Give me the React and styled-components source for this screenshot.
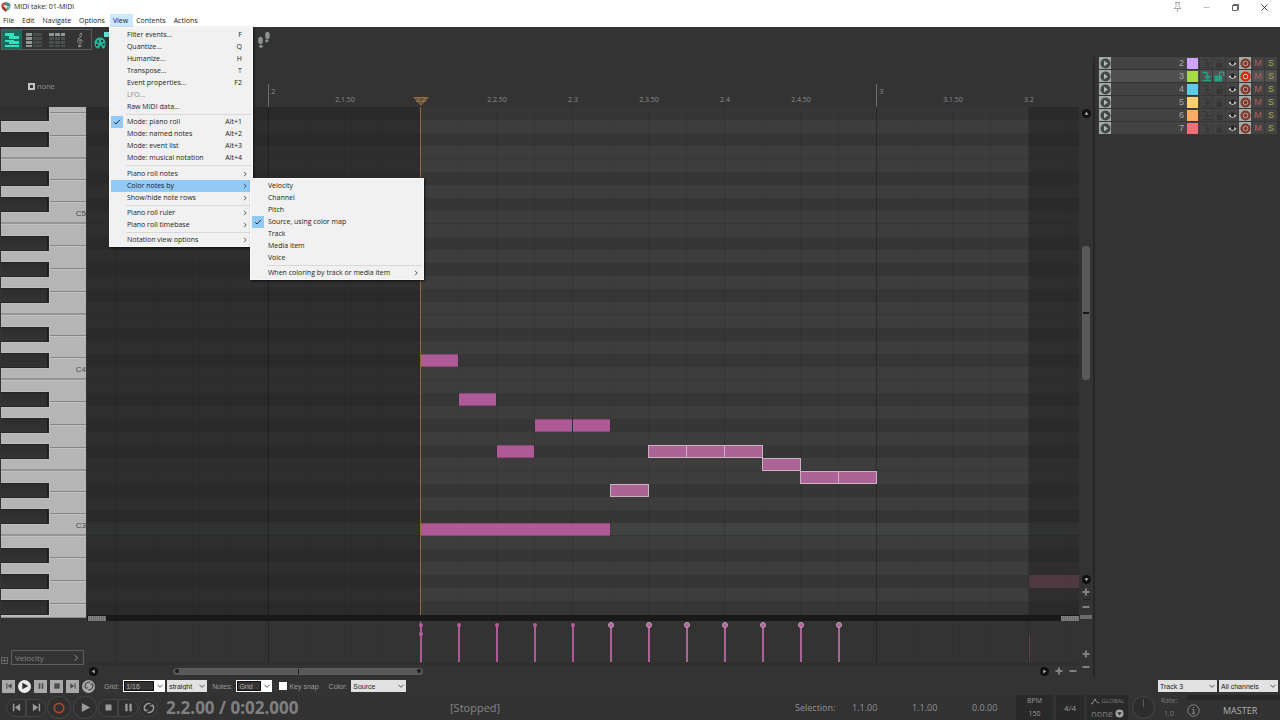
import React, { useState } from 'react';
import styled, { createGlobalStyle, css } from 'styled-components';
import { GiGClef } from 'react-icons/gi';

const GlobalStyle = createGlobalStyle`
  * {
    box-sizing: border-box;
  }
  body {
    margin: 0;
    background: #333333;
    font-family: 'Open Sans', 'Noto Sans', sans-serif;
    font-size: 7px;
    color: #8c8c8c;
  }
  button, input, select {
    font-family: inherit;
    font-size: inherit;
    color: inherit;
    margin: 0;
    padding: 0;
    border: none;
    background: none;
  }
  svg {
    display: block;
    flex: none;
  }
`;

const ROW_HEIGHT = 13;
const STEP = 38;
const FIRST_STEP = 29;
const TOP_PITCH = 80;
const ROW_COUNT = 39;
const BLACK_KEYS = [1, 3, 6, 8, 10];
const ITEM_START = 8;
const ITEM_END = 24;

const isBlack = (pitch) => BLACK_KEYS.includes(pitch % 12);
const stepX = (step) => FIRST_STEP + step * STEP;
const pitches = Array.from({ length: ROW_COUNT }, (_, i) => TOP_PITCH - i);
const steps = Array.from({ length: 26 }, (_, i) => i);

const notes = [
  { pitch: 61, start: 8, length: 1 },
  { pitch: 58, start: 9, length: 1 },
  { pitch: 54, start: 10, length: 1 },
  { pitch: 56, start: 11, length: 1 },
  { pitch: 56, start: 12, length: 1 },
  { pitch: 48, start: 8, length: 5 },
  { pitch: 51, start: 13, length: 1, selected: true },
  { pitch: 54, start: 14, length: 1, selected: true },
  { pitch: 54, start: 15, length: 1, selected: true },
  { pitch: 54, start: 16, length: 1, selected: true },
  { pitch: 53, start: 17, length: 1, selected: true },
  { pitch: 52, start: 18, length: 1, selected: true },
  { pitch: 52, start: 19, length: 1, selected: true },
];

const whiteKeys = [
  { name: 'A5', height: 6 },
  { name: 'G5', height: 23 },
  { name: 'F5', height: 23, full: true },
  { name: 'E5', height: 21 },
  { name: 'D5', height: 22 },
  { name: 'C5', height: 22, full: true },
  { name: 'B4', height: 22 },
  { name: 'A4', height: 23 },
  { name: 'G4', height: 23 },
  { name: 'F4', height: 23, full: true },
  { name: 'E4', height: 21 },
  { name: 'D4', height: 22 },
  { name: 'C4', height: 22, full: true },
  { name: 'B3', height: 22 },
  { name: 'A3', height: 23 },
  { name: 'G3', height: 23 },
  { name: 'F3', height: 23, full: true },
  { name: 'E3', height: 21 },
  { name: 'D3', height: 22 },
  { name: 'C3', height: 22, full: true },
  { name: 'B2', height: 22 },
  { name: 'A2', height: 23 },
  { name: 'G2', height: 23 },
  { name: 'F2', height: 14 },
];

const rulerMarks = [
  { step: 4, label: '2', bar: true },
  { step: 6, label: '2.1.50' },
  { step: 8, label: '2.2' },
  { step: 10, label: '2.2.50' },
  { step: 12, label: '2.3' },
  { step: 14, label: '2.3.50' },
  { step: 16, label: '2.4' },
  { step: 18, label: '2.4.50' },
  { step: 20, label: '3', bar: true },
  { step: 22, label: '3.1.50' },
  { step: 24, label: '3.2' },
];

const viewMenu = [
  [
    { label: 'Filter events...', keys: 'F' },
    { label: 'Quantize...', keys: 'Q' },
    { label: 'Humanize...', keys: 'H' },
    { label: 'Transpose...', keys: 'T' },
    { label: 'Event properties...', keys: 'F2' },
    { label: 'LFO...', disabled: true },
    { label: 'Raw MIDI data...' },
  ],
  [
    { label: 'Mode: piano roll', keys: 'Alt+1', checked: true },
    { label: 'Mode: named notes', keys: 'Alt+2' },
    { label: 'Mode: event list', keys: 'Alt+3' },
    { label: 'Mode: musical notation', keys: 'Alt+4' },
  ],
  [
    { label: 'Piano roll notes', more: true },
    {
      label: 'Color notes by',
      more: true,
      open: true,
      submenu: [
        [
          { label: 'Velocity' },
          { label: 'Channel' },
          { label: 'Pitch' },
          { label: 'Source, using color map', checked: true },
          { label: 'Track' },
          { label: 'Media item' },
          { label: 'Voice' },
        ],
        [{ label: 'When coloring by track or media item', more: true }],
      ],
    },
    { label: 'Show/hide note rows', more: true },
  ],
  [
    { label: 'Piano roll ruler', more: true },
    { label: 'Piano roll timebase', more: true },
  ],
  [{ label: 'Notation view options', more: true }],
];

const tracks = [
  { number: 2, color: '#cfa4fb' },
  { number: 3, color: '#a8d94c', active: true },
  { number: 4, color: '#5ccbe6' },
  { number: 5, color: '#ffd071' },
  { number: 6, color: '#fcab63' },
  { number: 7, color: '#f07078' },
];

const Window = styled.div`
  display: flex;
  flex-direction: column;
  min-height: 100vh;
  overflow: hidden;
`;

const TitleBar = styled.header`
  display: flex;
  align-items: center;
  gap: 3px;
  height: 14px;
  padding: 0 10px 0 1px;
  background: #ffffff;
  color: #1a1a1a;
  font-size: 7px;
  line-height: 14px;
`;
const WindowButtons = styled.div`
  display: flex;
  gap: 18px;
  margin-left: auto;
  button {
    display: flex;
    align-items: center;
    justify-content: center;
    width: 11px;
    height: 14px;
  }
`;

const MenuBar = styled.nav`
  display: flex;
  height: 13px;
  background: #ffffff;
  color: #1a1a1a;
`;
const MenuSlot = styled.div`
  position: relative;
`;
const MenuTitle = styled.button`
  height: 13px;
  padding: 0 5px 0 3px;
  font-size: 7px;
  line-height: 12px;
  background: ${(props) => (props.$open ? '#cce8ff' : 'none')};
`;
const MenuPanel = styled.div`
  position: absolute;
  z-index: 5;
  top: ${(props) => (props.$nested ? '-2px' : '100%')};
  left: ${(props) => (props.$nested ? '140px' : '-1px')};
  display: flex;
  flex-direction: column;
  justify-content: space-between;
  width: ${(props) => (props.$nested ? '174px' : '144px')};
  height: ${(props) => (props.$nested ? '102px' : '220px')};
  padding-top: 1px;
  border: 1px solid #f8f8f8;
  background: #f1f1f1;
  color: #1c1c1c;
  box-shadow: 1px 1px 2px rgba(0, 0, 0, 0.7);
`;
const MenuRule = styled.hr`
  width: calc(100% - 17px);
  height: 1px;
  margin: 0 0 0 16px;
  border: none;
  background: #d8d8d8;
`;
const MenuRow = styled.div`
  position: relative;
`;
const MenuItem = styled.button`
  display: flex;
  align-items: center;
  width: calc(100% - 3px);
  height: 12px;
  margin-left: 1px;
  padding-right: 2px;
  font-size: 7px;
  line-height: 12px;
  text-align: left;
  background: ${(props) => (props.$open ? '#91c9f7' : 'none')};
  color: ${(props) => (props.disabled ? '#8a8a8a' : 'inherit')};
`;
const MenuCheck = styled.span`
  display: flex;
  align-items: center;
  justify-content: center;
  width: 12px;
  height: 12px;
  margin-right: 4px;
  background: ${(props) => (props.$checked ? '#91c9f7' : 'none')};
`;
const MenuKeys = styled.span`
  margin-left: auto;
  padding-right: 6px;
`;
const MenuArrow = styled.span`
  margin-left: auto;
`;

const Workspace = styled.main`
  display: flex;
  flex: 1;
`;
const Editor = styled.section`
  display: flex;
  flex-direction: column;
  flex: 1;
  min-width: 0;
`;
const IconBar = styled.div`
  display: flex;
  align-items: flex-start;
  height: 29px;
  padding: 2px 0 0 1px;
`;
const ModeGroup = styled.div`
  display: flex;
  height: 21px;
  border: 1px solid #5a5f5e;
`;
const ModeButton = styled.button`
  display: flex;
  align-items: center;
  justify-content: center;
  width: ${(props) => (props.$active ? '20px' : '23px')};
  height: 19px;
  color: #8f9897;
  background: ${(props) => (props.$active ? '#1a6a5d' : 'none')};
`;
const ToolButton = styled.button`
  display: flex;
  height: 21px;
  margin-left: ${(props) => (props.$far ? '146px' : '2px')};
`;

const Columns = styled.div`
  display: flex;
  flex: 1;
`;
const KeyColumn = styled.div`
  display: flex;
  flex-direction: column;
  width: 87px;
`;
const ChannelCorner = styled.div`
  height: 51px;
  padding: 24px 0 0 28px;
  label {
    display: flex;
    align-items: center;
    gap: 2px;
    font-family: 'Liberation Sans', Arial, sans-serif;
    font-size: 8px;
    line-height: 13px;
  }
  input {
    appearance: none;
    width: 7px;
    height: 7px;
    border: 2px solid #c4c4c4;
  }
`;
const Piano = styled.div`
  position: relative;
  height: 511px;
  margin: 0 1px;
  background: #b5b5b5;
  border-bottom: 1px solid #8d8d8d;
  overflow: hidden;
`;
const WhiteKey = styled.div`
  height: ${(props) => props.$height}px;
  margin-left: ${(props) => (props.$full ? '0' : '49px')};
  border-bottom: ${(props) =>
    props.$full ? '2px solid #949494' : '1px solid #858585'};
  box-shadow: 0 1px 0 #c2c2c2;
  font-family: 'Liberation Sans', Arial, sans-serif;
  font-size: 8px;
  line-height: 23px;
  text-align: right;
  color: #4c4c4c;
`;
const BlackKeys = styled.div`
  position: absolute;
  top: 0;
  left: 0;
  width: 47px;
`;
const BlackKey = styled.div`
  height: ${ROW_HEIGHT}px;
  ${(props) =>
    props.$black &&
    css`
      background: linear-gradient(#2d2d2d, #343434);
      border-right: 1px solid #1d1d1d;
      box-shadow: 0 0 0 1px #262626, 0 0 0 2px #bdbdbd;
    `}
`;
const LanePicker = styled.div`
  display: flex;
  align-items: flex-end;
  gap: 2px;
  padding: 32px 3px 0 1px;
`;
const LaneButton = styled.button`
  display: flex;
  flex: 1;
  align-items: center;
  justify-content: space-between;
  height: 15px;
  padding: 0 3px;
  border: 1px solid #5e5e5e;
  font-size: 8px;
  line-height: 13px;
  color: #858585;
`;

const Timeline = styled.div`
  display: flex;
  flex-direction: column;
  flex: 1;
  min-width: 0;
`;
const Ruler = styled.div`
  position: relative;
  height: 51px;
`;
const RulerMark = styled.span`
  position: absolute;
  bottom: ${(props) => (props.$bar ? '0' : '2px')};
  height: ${(props) => (props.$bar ? '23px' : '10px')};
  font-size: ${(props) => (props.$bar ? '8px' : '7px')};
  line-height: ${(props) => (props.$bar ? '13px' : '10px')};
  white-space: nowrap;
  ${(props) =>
    props.$bar
      ? css`
          padding-left: 2px;
          border-left: 1px solid #6e6e6e;
        `
      : css`
          margin-left: 1px;
          transform: translateX(-50%);
        `}
`;
const CursorHead = styled.svg`
  position: absolute;
  bottom: 1px;
  margin-left: -7px;
`;
const Roll = styled.div`
  position: relative;
  height: 508px;
  overflow: hidden;
`;
const Row = styled.div`
  height: ${ROW_HEIGHT}px;
  background: ${(props) =>
    props.$root ? '#404342' : props.$black ? '#363636' : '#3d3d3d'};
  border-bottom: 1px solid ${(props) => (props.$edge ? '#363636' : 'transparent')};
`;
const Shade = styled.div`
  position: absolute;
  top: 0;
  bottom: 0;
  background: rgba(24, 24, 24, 0.4);
`;
const GridLine = styled.div`
  position: absolute;
  top: 0;
  bottom: 0;
  width: 1px;
  background: rgba(0, 0, 0, ${(props) => props.$depth});
`;
const OutOfRange = styled.div`
  position: absolute;
  height: ${ROW_HEIGHT}px;
  right: 0;
  background: #4f3940;
`;
const Note = styled.div`
  position: absolute;
  height: 13px;
  border: 1px solid ${(props) => (props.$selected ? '#c9b3c2' : '#8a4877')};
  border-width: ${(props) => (props.$selected ? '1px' : '1px 0')};
  background: ${(props) => (props.$selected ? '#ac6497' : '#ae5a97')};
`;
const PlayLine = styled.div`
  position: absolute;
  top: 0;
  bottom: 0;
  width: 1px;
  background: #92683f;
`;
const Splitter = styled.div`
  display: flex;
  align-items: center;
  justify-content: space-between;
  height: 6px;
  padding-left: 1px;
  background: #191919;
`;
const Grip = styled.div`
  width: 18px;
  height: 5px;
  background: repeating-linear-gradient(90deg, #808080 0 1px, #6e6e6e 1px 2px);
`;
const Lane = styled.div`
  position: relative;
  height: 44px;
  border-bottom: 2px solid #2e2e2e;
`;
const Stem = styled.div`
  position: absolute;
  top: 4px;
  bottom: 1px;
  width: 2px;
  background: ${(props) => (props.$selected ? '#ac6497' : '#ae5a97')};
`;
const Head = styled.div`
  position: absolute;
  width: ${(props) => (props.$selected ? '6px' : '4px')};
  height: ${(props) => (props.$selected ? '6px' : '4px')};
  border-radius: 50%;
  border: ${(props) => (props.$selected ? '1px solid #b9a3b2' : 'none')};
  background: #b5609e;
`;
const EndStem = styled.div`
  position: absolute;
  top: 13px;
  bottom: 1px;
  width: 1px;
  background: #5c3f46;
`;
const TimeScroll = styled.div`
  display: flex;
  align-items: center;
  gap: 6px;
  height: 12px;
  padding: 0 2px;
`;
const ScrollTrack = styled.div`
  flex: 1;
  padding-left: 69px;
`;
const TimeThumb = styled.div`
  display: flex;
  align-items: center;
  justify-content: space-between;
  width: 250px;
  height: 7px;
  padding: 0 2px;
  border-radius: 4px;
  background: #595959;
  i {
    width: 4px;
    height: 4px;
    border-radius: 50%;
    background: #1c1c1c;
  }
  b {
    width: 1px;
    height: 5px;
    background: #1c1c1c;
  }
`;
const RoundArrow = styled.button`
  display: flex;
  align-items: center;
  justify-content: center;
  width: 9px;
  height: 9px;
  border-radius: 50%;
  background: #101010;
  color: #b0b0b0;
`;
const ZoomButton = styled.button`
  display: flex;
  align-items: center;
  justify-content: center;
  width: 8px;
  height: 8px;
  color: #818181;
`;
const PitchScroll = styled.div`
  display: flex;
  flex-direction: column;
  align-items: center;
  width: 14px;
  padding-top: 53px;
`;
const PitchTrack = styled.div`
  width: 8px;
  height: 457px;
  padding-top: 128px;
`;
const PitchThumb = styled.div`
  display: flex;
  align-items: center;
  justify-content: center;
  width: 8px;
  height: 134px;
  border-radius: 3px;
  background: #595959;
  b {
    width: 6px;
    height: 2px;
    background: #161616;
  }
`;
const ZoomPair = styled.div`
  display: flex;
  flex-direction: column;
  align-items: center;
  gap: ${(props) => props.$gap}px;
  padding-top: 4px;
  hr {
    width: 7px;
    height: 1px;
    margin: 0;
    border: none;
    background: #222222;
  }
`;
const SideGrip = styled.div`
  width: 12px;
  height: 4px;
  margin: 4px 0 27px;
  background: #6b6b6b;
`;

const TrackPanel = styled.aside`
  width: 187px;
  margin-top: 30px;
  padding-right: 3px;
  padding-left: 3px;
  border-left: 2px solid #262626;
`;
const TrackRow = styled.div`
  display: flex;
  align-items: center;
  height: 13px;
  border-bottom: 1px solid #353535;
  background: ${(props) => (props.$active ? '#505050' : '#434343')};
`;
const TrackNumber = styled.span`
  flex: 1;
  padding-right: 3px;
  text-align: right;
  font-family: 'Liberation Sans', Arial, sans-serif;
  font-size: 9px;
  line-height: 12px;
  color: #a9a9a9;
`;
const Swatch = styled.span`
  width: 11px;
  height: 11px;
  margin-right: 1px;
  background: ${(props) => props.$color};
`;
const TrackButton = styled.button`
  display: flex;
  align-items: center;
  justify-content: center;
  width: 13px;
  height: 12px;
  border-left: 1px solid #3a3a3a;
  font-family: 'Liberation Sans', Arial, sans-serif;
  font-size: 9px;
  line-height: 12px;
  color: ${(props) => props.$color || '#363636'};
  background: ${(props) => (props.$light ? '#a3aba8' : 'none')};
`;

const BottomBar = styled.div`
  display: flex;
  align-items: center;
  height: 18px;
  padding: 0 2px;
`;
const MiniButtons = styled.div`
  display: flex;
  gap: 3px;
  margin-right: 9px;
`;
const MiniButton = styled.button`
  display: flex;
  align-items: center;
  justify-content: center;
  width: 13px;
  height: 13px;
  border-radius: ${(props) => (props.$round ? '50%' : '0')};
  background: ${(props) => (props.$on ? '#ececec' : '#a9a9a9')};
  color: ${(props) => (props.$on ? '#303030' : '#4c4c4c')};
`;
const FieldLabel = styled.label`
  margin: 0 4px 0 ${(props) => (props.$spaced ? '10px' : '0')};
  font-family: 'Liberation Sans', Arial, sans-serif;
  font-size: 7px;
  color: #9c9c9c;
`;
const Combo = styled.div`
  position: relative;
  display: flex;
  align-items: center;
  width: ${(props) => props.$width}px;
  height: 12px;
  margin-right: ${(props) => props.$after || 0}px;
  background: ${(props) => (props.$editable ? '#ffffff' : '#e1e1e1')};
  color: #1c1c1c;
  svg {
    position: absolute;
    right: 2px;
    pointer-events: none;
  }
  select {
    appearance: none;
    width: 100%;
    height: 12px;
    padding-left: 2px;
    font-family: 'Liberation Sans', Arial, sans-serif;
    font-size: 7px;
  }
  input {
    width: calc(100% - 12px);
    height: 10px;
    margin-left: 1px;
    padding-left: 1px;
    border: 1px solid #101010;
    background: #333333;
    color: #b5b5b5;
    font-family: 'Liberation Sans', Arial, sans-serif;
    font-size: 7px;
  }
`;
const SnapBox = styled.label`
  display: flex;
  align-items: center;
  gap: 2px;
  font-family: 'Liberation Sans', Arial, sans-serif;
  font-size: 7px;
  color: #9c9c9c;
  input {
    appearance: none;
    width: 8px;
    height: 8px;
    background: #ffffff;
  }
`;
const Spring = styled.div`
  flex: 1;
`;

const Transport = styled.footer`
  display: flex;
  align-items: center;
  height: 25px;
  background: #323232;
`;
const TransportKeys = styled.div`
  display: flex;
  align-items: center;
  padding-left: 6px;
`;
const TransportButton = styled.button`
  display: flex;
  align-items: center;
  justify-content: center;
  width: ${(props) => (props.$round ? '24px' : '20px')};
  height: ${(props) => (props.$round ? '23px' : '18px')};
  margin: ${(props) => (props.$round ? '0 1px' : '0')};
  border: 1px solid #444444;
  border-radius: ${(props) => props.$radius};
  background: #2f2f2f;
  color: #9b9b9b;
`;
const LoopButton = styled(TransportButton)`
  width: 19px;
  margin-left: 1px;
`;
const Clock = styled.div`
  width: 292px;
  padding-left: 8px;
  font-size: 17px;
  font-weight: 700;
  line-height: 24px;
  color: #808080;
`;
const Status = styled.div`
  font-size: 11px;
  line-height: 24px;
  color: #858585;
`;
const Readout = styled.div`
  width: 60px;
  font-size: 9px;
  line-height: 24px;
  color: #929292;
`;
const ReadoutLabel = styled(Readout)`
  width: 57px;
`;
const LastReadout = styled(Readout)`
  width: 44px;
`;
const Tempo = styled.div`
  display: flex;
  flex-direction: column;
  align-items: center;
  justify-content: space-around;
  width: ${(props) => props.$width}px;
  height: 25px;
  margin-right: 3px;
  background: #292929;
  color: #9c9c9c;
  font-size: ${(props) => props.$size || 7}px;
  line-height: 10px;
`;
const GlobalRow = styled.button`
  display: flex;
  align-items: center;
  gap: 2px;
  font-size: ${(props) => (props.$big ? '9px' : '6px')};
  line-height: 10px;
  color: #7f7f7f;
`;
const RateKnob = styled.div`
  width: 23px;
  height: 23px;
  margin: 0 5px 0 1px;
  border: 1px solid #484848;
  border-radius: 50%;
  background: #2d2d2d;
  &::before {
    content: '';
    display: block;
    width: 1px;
    height: 8px;
    margin: 2px auto 0;
    background: #5a5a5a;
  }
`;
const Rate = styled.div`
  display: flex;
  flex-direction: column;
  justify-content: space-around;
  align-items: center;
  width: 18px;
  height: 25px;
  margin-right: 9px;
  font-size: 7px;
  line-height: 10px;
  color: #7c7c7c;
`;
const Master = styled.button`
  display: flex;
  align-items: center;
  width: 93px;
  height: 25px;
  border-top: 5px solid #282828;
  gap: 23px;
  font-size: 9px;
  color: #b0b0b0;
`;

const Chevron = () => (
  <svg width='6' height='6' viewBox='0 0 6 6' fill='none' stroke='#444444'>
    <path d='M0.5 1.8L3 4.3L5.5 1.8' strokeWidth='0.9' />
  </svg>
);

const RightChevron = ({ size = 6, color = '#333333' }) => (
  <svg width={size} height={size} viewBox='0 0 6 6' fill='none' stroke={color}>
    <path d='M2 0.8L4.2 3L2 5.2' strokeWidth='0.8' />
  </svg>
);

const Triangle = ({ turn = 0 }) => (
  <svg width='5' height='5' viewBox='0 0 5 5' fill='currentColor'>
    <path d='M1.3 0.5L4.3 2.5L1.3 4.5Z' transform={`rotate(${turn} 2.5 2.5)`} />
  </svg>
);

const PlusMinus = ({ plus }) => (
  <svg width='8' height='8' viewBox='0 0 8 8' fill='currentColor'>
    <rect x='0.5' y='3' width='7' height='2' />
    {plus && <rect x='3' y='0.5' width='2' height='7' />}
  </svg>
);

const Logo = () => (
  <svg width='10' height='10' viewBox='0 0 10 10'>
    <path d='M5 0.3C2 0.3 0.3 2 0.3 3.6L5 5Z' fill='#c43a31' />
    <path d='M5 0.3C8 0.3 9.7 2 9.7 3.8L5 5L3.8 1.4Z' fill='#3b8f83' />
    <path d='M9.7 3.8C9.6 6.5 7.5 9 5 9.7L4.6 5Z' fill='#7cae9d' />
    <path d='M0.3 3.6C0.6 6.8 2.6 9 5 9.7L5.6 6Z' fill='#a02a26' />
    <path d='M2.3 2.2L6.8 4.2L4.4 7Z' fill='#f5e8e0' />
  </svg>
);

const transportShapes = {
  prev: <path d='M2 2h1.6v8H2zM10 2v8L4 6z' />,
  next: <path d='M8.4 2H10v8H8.4zM2 2v8l6-4z' />,
  play: <path d='M2 1L11 6L2 11Z' />,
  pause: <path d='M2.5 2H5v8H2.5zM7 2h2.5v8H7z' />,
  stop: <path d='M2 2h8v8H2z' />,
  loop: (
    <g fill='none' stroke='currentColor' strokeWidth='1.5'>
      <path d='M2.2 8.5A4.5 4.5 0 0 1 7.5 1.8M9.8 3.5A4.5 4.5 0 0 1 4.5 10.2' />
      <path d='M1 6.5L2.3 9L4.8 7.8M11 5.5L9.7 3L7.2 4.2' strokeWidth='1.2' />
    </g>
  ),
};

const TransportIcon = ({ name, size = 9 }) => (
  <svg width={size} height={size} viewBox='0 0 12 12' fill='currentColor'>
    {transportShapes[name]}
  </svg>
);

const MenuGroups = ({ groups }) =>
  groups.map((group, index) => (
    <React.Fragment key={group[0].label}>
      {index > 0 && <MenuRule />}
      <div>
        {group.map((item) => (
          <MenuRow key={item.label}>
            <MenuItem type='button' disabled={item.disabled} $open={item.open}>
              <MenuCheck $checked={item.checked}>
                {item.checked && (
                  <svg width='8' height='8' viewBox='0 0 8 8' fill='none' stroke='#1c2f40'>
                    <path d='M1.2 4.2L3 6L6.8 1.9' />
                  </svg>
                )}
              </MenuCheck>
              {item.label}
              {item.keys && <MenuKeys>{item.keys}</MenuKeys>}
              {item.more && (
                <MenuArrow>
                  <RightChevron />
                </MenuArrow>
              )}
            </MenuItem>
            {item.submenu && (
              <MenuPanel $nested>
                <MenuGroups groups={item.submenu} />
              </MenuPanel>
            )}
          </MenuRow>
        ))}
      </div>
    </React.Fragment>
  ));

const Header = () => {
  const [openMenu, setOpenMenu] = useState('View');
  const toggleMenu = (title) => setOpenMenu(openMenu === title ? '' : title);

  return (
    <>
      <TitleBar>
        <Logo />
        <span>MIDI take: 01-MIDI</span>
        <WindowButtons>
          <button type='button' aria-label='Pin'>
            <svg width='9' height='11' viewBox='0 0 9 11' fill='none' stroke='#a8a8a8'>
              <path d='M2 0.5H7M3 0.5V4.5L1 6.5H8L6 4.5V0.5M4.5 6.5V10' />
            </svg>
          </button>
          <button type='button' aria-label='Minimize'>
            <svg width='7' height='7' viewBox='0 0 7 7' stroke='#c0c0c0'>
              <path d='M0.5 3.5H6.5' />
            </svg>
          </button>
          <button type='button' aria-label='Restore'>
            <svg width='7' height='7' viewBox='0 0 7 7' fill='none' stroke='#222222'>
              <path
                d='M0.5 1.5H5.5V6.5H0.5ZM1.5 1.5V0.5H6.5V5.5H5.5'
                strokeWidth='0.7'
              />
            </svg>
          </button>
          <button type='button' aria-label='Close'>
            <svg width='7' height='7' viewBox='0 0 7 7' stroke='#222222'>
              <path d='M0.5 0.5L6.5 6.5M6.5 0.5L0.5 6.5' strokeWidth='0.8' />
            </svg>
          </button>
        </WindowButtons>
      </TitleBar>
      <MenuBar>
        {['File', 'Edit', 'Navigate', 'Options', 'View', 'Contents', 'Actions'].map(
          (title) => (
            <MenuSlot key={title}>
              <MenuTitle
                type='button'
                $open={openMenu === title}
                onClick={() => toggleMenu(title)}
              >
                {title}
              </MenuTitle>
              {title === 'View' && openMenu === 'View' && (
                <MenuPanel>
                  <MenuGroups groups={viewMenu} />
                </MenuPanel>
              )}
            </MenuSlot>
          )
        )}
      </MenuBar>
    </>
  );
};

const EditorIcons = () => (
  <IconBar>
    <ModeGroup>
      <ModeButton type='button' aria-label='Piano roll' $active>
        <svg width='16' height='16' viewBox='0 0 16 16' fill='#35e0bf'>
          <path d='M1 1h9v3H1zM5 4h10v3H5zM1 8h9v2H1zM5 9h10v3H5zM1 13h14v2H1z' />
        </svg>
      </ModeButton>
      <ModeButton type='button' aria-label='Named notes'>
        <svg width='18' height='16' viewBox='0 0 18 16'>
          <path d='M1 1h6v3H1zM1 5h6v3H1zM1 9h6v3H1zM1 13h6v2H1z' fill='#8f9897' />
          <path d='M8 1h9v3H8zM8 5h9v3H8zM8 9h9v3H8zM8 13h9v2H8z' fill='#484c4b' />
        </svg>
      </ModeButton>
      <ModeButton type='button' aria-label='Event list'>
        <svg width='18' height='16' viewBox='0 0 18 16'>
          <path d='M1 1h5v3H1zM7 1h5v3H7zM13 1h4v3h-4z' fill='#8f9897' />
          <path
            d='M1 5h5v3H1zM7 5h5v3H7zM13 5h4v3h-4zM1 9h5v3H1zM7 9h5v3H7zM13 9h4v3h-4zM1 13h5v2H1zM7 13h5v2H7zM13 13h4v2h-4z'
            fill='#4b504f'
          />
        </svg>
      </ModeButton>
      <ModeButton type='button' aria-label='Musical notation'>
        <GiGClef size={16} />
      </ModeButton>
    </ModeGroup>
    <ToolButton type='button' aria-label='Note colors'>
      <svg width='16' height='20' viewBox='0 0 16 20'>
        <path
          fill='#1fb89a'
          fillRule='evenodd'
          d='M6 8.5C2.5 8.5 0.5 11 0.5 14C0.5 17 2 19.5 4.500 19.5C6 19.5 5.2 16.5 6.5 16.5C8 16.5 7.5 19.5 9 19.5C11 19.5 11.5 17 11.5 14C11.5 11 9.5 8.5 6 8.5ZM3 11.5h2v2H3zM7 11h2v2H7zM2 15h2v2H2zM8.5 14.5h2v2H8.5z'
        />
        <rect x='10' y='3' width='6' height='5' fill='#5fe0cb' />
      </svg>
    </ToolButton>
    <ToolButton type='button' aria-label='Step input' $far>
      <svg width='16' height='20' viewBox='0 0 16 20' fill='#8a9090'>
        <ellipse cx='4.5' cy='11.5' rx='2.4' ry='3.7' />
        <ellipse cx='5' cy='17.3' rx='1.8' ry='1.5' />
        <ellipse cx='11.5' cy='6.5' rx='2.3' ry='3.7' />
        <ellipse cx='10.8' cy='12' rx='1.7' ry='1.4' />
      </svg>
    </ToolButton>
  </IconBar>
);

const PianoKeys = () => (
  <KeyColumn>
    <ChannelCorner>
      <label>
        <input type='checkbox' />
        none
      </label>
    </ChannelCorner>
    <Piano>
      {whiteKeys.map((key) => (
        <WhiteKey key={key.name} $height={key.height} $full={key.full}>
          {key.name.startsWith('C') && key.name}
        </WhiteKey>
      ))}
      <BlackKeys>
        {pitches.map((pitch) => (
          <BlackKey key={pitch} $black={isBlack(pitch)} />
        ))}
      </BlackKeys>
    </Piano>
    <LanePicker>
      <svg width='8' height='8' viewBox='0 0 8 8' fill='none' stroke='#777777'>
        <path d='M0.5 0.5h6v6h-6zM3.5 1.5v4M1.5 3.5h4' strokeWidth='0.8' />
      </svg>
      <LaneButton type='button'>
        Velocity
        <RightChevron size={8} color='#777777' />
      </LaneButton>
    </LanePicker>
  </KeyColumn>
);

const gridDepth = (step) => {
  if (step === 4 || step === 20) return 0.28;
  return step % 4 === 0 ? 0.14 : 0.06;
};

const GridLines = () =>
  steps.map((step) => (
    <GridLine key={step} $depth={gridDepth(step)} style={{ left: stepX(step) }} />
  ));

const TimelineView = () => (
  <Timeline>
    <Ruler>
      {rulerMarks.map((mark) => (
        <RulerMark key={mark.label} $bar={mark.bar} style={{ left: stepX(mark.step) }}>
          {mark.label}
        </RulerMark>
      ))}
      <CursorHead
        width='16'
        height='9'
        viewBox='0 0 16 9'
        fill='rgba(190, 130, 70, 0.4)'
        stroke='#a5753f'
        style={{ left: stepX(ITEM_START) }}
      >
        <path d='M0.8 0.5H15.2L8 8.3Z' strokeWidth='0.8' />
      </CursorHead>
    </Ruler>
    <Roll>
      {pitches.map((pitch) => (
        <Row
          key={pitch}
          $black={isBlack(pitch)}
          $root={pitch === 48}
          $edge={pitch % 12 === 0 || pitch % 12 === 5}
        />
      ))}
      <Shade style={{ left: 0, width: stepX(ITEM_START) }} />
      <Shade style={{ left: stepX(ITEM_END) + 1, right: 0 }} />
      <OutOfRange style={{ left: stepX(ITEM_END) + 1, top: 36 * ROW_HEIGHT }} />
      <GridLines />
      {notes.map((note) => (
        <Note
          key={`${note.pitch}-${note.start}`}
          $selected={note.selected}
          style={{
            left: stepX(note.start) + (note.selected ? 0 : 1),
            top: (TOP_PITCH - note.pitch) * ROW_HEIGHT,
            width: note.length * STEP + (note.selected ? 1 : -1),
          }}
        />
      ))}
      <PlayLine style={{ left: stepX(ITEM_START) }} />
    </Roll>
    <Splitter>
      <Grip />
      <Grip />
    </Splitter>
    <Lane>
      <GridLines />
      <PlayLine style={{ left: stepX(ITEM_START) }} />
      {notes
        .filter((note) => note.length === 1)
        .map((note) => (
          <React.Fragment key={note.start}>
            <Stem $selected={note.selected} style={{ left: stepX(note.start) }} />
            <Head
              $selected={note.selected}
              style={{
                left: stepX(note.start) - (note.selected ? 2 : 1),
                top: note.selected ? 1 : 2,
              }}
            />
          </React.Fragment>
        ))}
      <Head style={{ left: stepX(ITEM_START) - 1, top: 11 }} />
      <EndStem style={{ left: stepX(ITEM_END) + 1 }} />
    </Lane>
    <TimeScroll>
      <RoundArrow type='button' aria-label='Scroll left'>
        <Triangle turn={180} />
      </RoundArrow>
      <ScrollTrack>
        <TimeThumb>
          <i />
          <b />
          <i />
        </TimeThumb>
      </ScrollTrack>
      <RoundArrow type='button' aria-label='Scroll right'>
        <Triangle />
      </RoundArrow>
      <ZoomButton type='button' aria-label='Zoom in time'>
        <PlusMinus plus />
      </ZoomButton>
      <ZoomButton type='button' aria-label='Zoom out time'>
        <PlusMinus />
      </ZoomButton>
    </TimeScroll>
  </Timeline>
);

const PitchScrollbar = () => (
  <PitchScroll>
    <RoundArrow type='button' aria-label='Scroll up'>
      <Triangle turn={270} />
    </RoundArrow>
    <PitchTrack>
      <PitchThumb>
        <b />
      </PitchThumb>
    </PitchTrack>
    <RoundArrow type='button' aria-label='Scroll down'>
      <Triangle turn={90} />
    </RoundArrow>
    <ZoomPair $gap={3}>
      <ZoomButton type='button' aria-label='Zoom in pitch'>
        <PlusMinus plus />
      </ZoomButton>
      <hr />
      <ZoomButton type='button' aria-label='Zoom out pitch'>
        <PlusMinus />
      </ZoomButton>
    </ZoomPair>
    <SideGrip />
    <ZoomPair $gap={5}>
      <ZoomButton type='button' aria-label='Zoom in lane'>
        <PlusMinus plus />
      </ZoomButton>
      <ZoomButton type='button' aria-label='Zoom out lane'>
        <PlusMinus />
      </ZoomButton>
    </ZoomPair>
  </PitchScroll>
);

const TrackList = () => (
  <TrackPanel>
    {tracks.map((track) => (
      <TrackRow key={track.number} $active={track.active}>
        <TrackButton type='button' aria-label='Show track' $light>
          <svg width='11' height='11' viewBox='0 0 11 11'>
            <circle cx='5.5' cy='5.5' r='5' fill='#444948' />
            <path d='M4 2.8L8 5.5L4 8.2Z' fill='#b3bab8' />
          </svg>
        </TrackButton>
        <TrackNumber>{track.number}</TrackNumber>
        <Swatch $color={track.color} />
        <TrackButton
          type='button'
          aria-label='Record to track'
          $color={track.active ? '#1da583' : undefined}
        >
          <svg width='11' height='11' viewBox='0 0 11 11' fill='none' stroke='currentColor'>
            <path
              d='M1 1.5H4Q6.5 1.5 6.5 4V7M4 5L6.5 7.5L9 5M1.5 9.5H10'
              strokeWidth={track.active ? 1.6 : 1.1}
            />
          </svg>
        </TrackButton>
        <TrackButton
          type='button'
          aria-label='Lock'
          $color={track.active ? '#1da583' : undefined}
        >
          <svg width='11' height='11' viewBox='0 0 11 11' fill='currentColor'>
            {track.active ? (
              <>
                <rect x='0.5' y='4.5' width='7.5' height='6' />
                <path
                  d='M5.5 4.5V2.5Q5.5 1 7.5 1Q9.8 1 9.8 2.5V5'
                  fill='none'
                  stroke='currentColor'
                  strokeWidth='1.4'
                />
              </>
            ) : (
              <>
                <rect x='2.5' y='5' width='6' height='5' />
                <path
                  d='M3.5 5V3.5Q3.5 2 5.5 2Q7.5 2 7.5 3.5V5'
                  fill='none'
                  stroke='currentColor'
                />
              </>
            )}
          </svg>
        </TrackButton>
        <TrackButton type='button' aria-label='Visible'>
          <svg width='9' height='9' viewBox='0 0 9 9'>
            <path d='M0.5 4.5Q4.5 0.5 8.5 4.5Q4.5 9 0.5 4.5Z' fill='#d8dedc' />
            <circle cx='4.5' cy='4' r='2' fill='#222222' />
            <path d='M0.5 4Q4.5 0 8.5 4' fill='none' stroke='#1c1c1c' strokeWidth='0.8' />
          </svg>
        </TrackButton>
        <TrackButton type='button' aria-label='Record arm' $light>
          <svg width='11' height='11' viewBox='0 0 11 11'>
            <circle cx='5.5' cy='5.5' r='5' fill={track.active ? '#dd2208' : '#7b3b30'} />
            <circle
              cx='5.5'
              cy='5.5'
              r='2.3'
              fill='none'
              stroke={track.active ? '#f3d3cb' : '#c79d94'}
            />
          </svg>
        </TrackButton>
        <TrackButton type='button' $color='#b0605a'>
          M
        </TrackButton>
        <TrackButton type='button' $color='#a9a94e'>
          S
        </TrackButton>
      </TrackRow>
    ))}
  </TrackPanel>
);

const GridControls = () => {
  const [gridSize, setGridSize] = useState('1/16');
  const [noteSize, setNoteSize] = useState('Grid');

  return (
    <BottomBar>
      <MiniButtons>
        {['prev', 'play', 'pause', 'stop', 'next', 'loop'].map((name) => (
          <MiniButton
            key={name}
            type='button'
            aria-label={name}
            $round={name === 'play' || name === 'loop'}
            $on={name === 'play'}
          >
            <TransportIcon name={name} size={name === 'loop' ? 10 : 8} />
          </MiniButton>
        ))}
      </MiniButtons>
      <FieldLabel htmlFor='grid-size'>Grid:</FieldLabel>
      <Combo $width={42} $after={2} $editable>
        <input id='grid-size' value={gridSize} onChange={(e) => setGridSize(e.target.value)} />
        <Chevron />
      </Combo>
      <Combo $width={40} $after={5}>
        <select aria-label='Grid type'>
          <option>straight</option>
        </select>
        <Chevron />
      </Combo>
      <FieldLabel htmlFor='note-size'>Notes:</FieldLabel>
      <Combo $width={36} $after={7} $editable>
        <input id='note-size' value={noteSize} onChange={(e) => setNoteSize(e.target.value)} />
        <Chevron />
      </Combo>
      <SnapBox>
        <input type='checkbox' />
        Key snap
      </SnapBox>
      <FieldLabel htmlFor='note-color' $spaced>
        Color:
      </FieldLabel>
      <Combo $width={55}>
        <select id='note-color'>
          <option>Source</option>
        </select>
        <Chevron />
      </Combo>
      <Spring />
      <Combo $width={59} $after={2}>
        <select aria-label='Track'>
          <option>Track 3</option>
        </select>
        <Chevron />
      </Combo>
      <Combo $width={59}>
        <select aria-label='Channel'>
          <option>All channels</option>
        </select>
        <Chevron />
      </Combo>
    </BottomBar>
  );
};

const TransportBar = () => (
  <Transport>
    <TransportKeys>
      <TransportButton type='button' aria-label='Go to start' $radius='9px 0 0 9px'>
        <TransportIcon name='prev' size={11} />
      </TransportButton>
      <TransportButton type='button' aria-label='Go to end' $radius='0 9px 9px 0'>
        <TransportIcon name='next' size={11} />
      </TransportButton>
      <TransportButton type='button' aria-label='Record' $round $radius='50%'>
        <svg width='12' height='12' viewBox='0 0 12 12' fill='none' stroke='#a8452f'>
          <circle cx='6' cy='6' r='4.7' strokeWidth='1.8' />
        </svg>
      </TransportButton>
      <TransportButton type='button' aria-label='Play' $round $radius='50%'>
        <TransportIcon name='play' size={11} />
      </TransportButton>
      <TransportButton type='button' aria-label='Stop' $radius='9px 0 0 9px'>
        <TransportIcon name='stop' />
      </TransportButton>
      <TransportButton type='button' aria-label='Pause' $radius='0 9px 9px 0'>
        <TransportIcon name='pause' size={11} />
      </TransportButton>
      <LoopButton type='button' aria-label='Repeat' $radius='50%'>
        <TransportIcon name='loop' size={12} />
      </LoopButton>
    </TransportKeys>
    <Clock>2.2.00 / 0:02.000</Clock>
    <Status>[Stopped]</Status>
    <Spring />
    <ReadoutLabel>Selection:</ReadoutLabel>
    <Readout>1.1.00</Readout>
    <Readout>1.1.00</Readout>
    <LastReadout>0.0.00</LastReadout>
    <Tempo $width={37}>
      <span>BPM</span>
      <span>150</span>
    </Tempo>
    <Tempo $width={28} $size={8}>
      <span>4/4</span>
    </Tempo>
    <Tempo $width={41}>
      <GlobalRow type='button'>
        <svg width='9' height='7' viewBox='0 0 9 7' fill='none' stroke='#858585'>
          <path d='M1 5.5L4 1.5L6 4.5L8.5 5' />
          <circle cx='1' cy='5.5' r='0.6' />
          <circle cx='4' cy='1.5' r='0.6' />
        </svg>
        GLOBAL
      </GlobalRow>
      <GlobalRow type='button' $big>
        none
        <svg width='9' height='9' viewBox='0 0 9 9'>
          <circle cx='4.5' cy='4.5' r='4' fill='#a5a5a5' />
          <path d='M2.3 3.2H6.7L4.5 6.6Z' fill='#2a2a2a' />
        </svg>
      </GlobalRow>
    </Tempo>
    <RateKnob />
    <Rate>
      <span>Rate:</span>
      <span>1.0</span>
    </Rate>
    <Master type='button'>
      <svg width='13' height='13' viewBox='0 0 13 13' fill='none' stroke='#8c8c8c'>
        <circle cx='6.5' cy='6.5' r='5.7' strokeWidth='0.9' />
        <path d='M5.3 5.5H6.7V9.3M5.2 9.4H8.2M6.5 3V4.2' />
      </svg>
      MASTER
    </Master>
  </Transport>
);

const App = () => (
  <Window>
    <GlobalStyle />
    <Header />
    <Workspace>
      <Editor>
        <EditorIcons />
        <Columns>
          <PianoKeys />
          <TimelineView />
          <PitchScrollbar />
        </Columns>
      </Editor>
      <TrackList />
    </Workspace>
    <GridControls />
    <TransportBar />
  </Window>
);

export default App;
